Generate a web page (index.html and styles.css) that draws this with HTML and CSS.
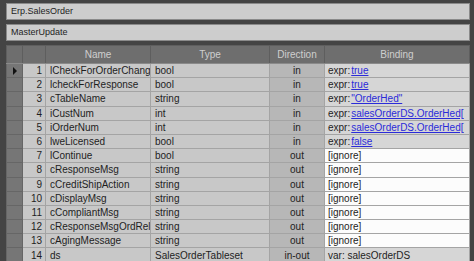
FILE: index.html
```html
<!DOCTYPE html>
<html>
<head>
<meta charset="utf-8">
<link rel="stylesheet" href="styles.css">
</head>
<body>
<div class="page">
  <div class="field">Erp.SalesOrder</div>
  <div class="field">MasterUpdate</div>
  <table class="grid">
    <colgroup>
      <col class="c-ind"><col class="c-num"><col class="c-name"><col class="c-type"><col class="c-dir"><col class="c-bind">
    </colgroup>
    <thead>
      <tr><th></th><th></th><th>Name</th><th>Type</th><th>Direction</th><th>Binding</th></tr>
    </thead>
    <tbody>
      <tr><td class="ind"><span class="arrow"></span></td><td class="num">1</td><td>lCheckForOrderChang</td><td>bool</td><td class="dir">in</td><td class="bind">expr:<a>true</a></td></tr>
      <tr><td class="ind"></td><td class="num">2</td><td>lcheckForResponse</td><td>bool</td><td class="dir">in</td><td class="bind">expr:<a>true</a></td></tr>
      <tr><td class="ind"></td><td class="num">3</td><td>cTableName</td><td>string</td><td class="dir">in</td><td class="bind">expr:<a>"OrderHed"</a></td></tr>
      <tr><td class="ind"></td><td class="num">4</td><td>iCustNum</td><td>int</td><td class="dir">in</td><td class="bind">expr:<a>salesOrderDS.OrderHed[</a></td></tr>
      <tr><td class="ind"></td><td class="num">5</td><td>iOrderNum</td><td>int</td><td class="dir">in</td><td class="bind">expr:<a>salesOrderDS.OrderHed[</a></td></tr>
      <tr><td class="ind"></td><td class="num">6</td><td>lweLicensed</td><td>bool</td><td class="dir">in</td><td class="bind">expr:<a>false</a></td></tr>
      <tr><td class="ind"></td><td class="num">7</td><td>lContinue</td><td>bool</td><td class="dir">out</td><td class="bind white">[ignore]</td></tr>
      <tr><td class="ind"></td><td class="num">8</td><td>cResponseMsg</td><td>string</td><td class="dir">out</td><td class="bind white">[ignore]</td></tr>
      <tr><td class="ind"></td><td class="num">9</td><td>cCreditShipAction</td><td>string</td><td class="dir">out</td><td class="bind white">[ignore]</td></tr>
      <tr><td class="ind"></td><td class="num">10</td><td>cDisplayMsg</td><td>string</td><td class="dir">out</td><td class="bind white">[ignore]</td></tr>
      <tr><td class="ind"></td><td class="num">11</td><td>cCompliantMsg</td><td>string</td><td class="dir">out</td><td class="bind white">[ignore]</td></tr>
      <tr><td class="ind"></td><td class="num">12</td><td>cResponseMsgOrdRel</td><td>string</td><td class="dir">out</td><td class="bind white">[ignore]</td></tr>
      <tr><td class="ind"></td><td class="num">13</td><td>cAgingMessage</td><td>string</td><td class="dir">out</td><td class="bind white">[ignore]</td></tr>
      <tr><td class="ind"></td><td class="num">14</td><td>ds</td><td>SalesOrderTableset</td><td class="dir">in-out</td><td class="bind">var: salesOrderDS</td></tr>
    </tbody>
  </table>
</div>
</body>
</html>
```
FILE: styles.css
```css
html, body {
  margin: 0;
  padding: 0;
  background: #444444;
  overflow: hidden;
}
.page {
  padding: 3px 4px 0 6px;
  display: flex;
  flex-direction: column;
  gap: 4px;
  font-family: "Liberation Sans", Arial, sans-serif;
  font-size: 10px;
  color: #1e1e1e;
}
.field {
  height: 15px;
  line-height: 15px;
  background: #cdcdcd;
  border: 1px solid #8a8a8a;
  padding-left: 4px;
  font-size: 9px;
}
.grid {
  border-collapse: collapse;
  table-layout: fixed;
  width: 463px;
  border: 1px solid #5a5a5a;
}
.c-ind { width: 16px; }
.c-num { width: 23px; }
.c-name { width: 105px; }
.c-type { width: 119px; }
.c-dir { width: 55px; }
.c-bind { width: 145px; }
.grid th {
  height: 17px;
  padding: 0;
  background: #6e6e6e;
  color: #cfcfcf;
  font-weight: normal;
  border: 1px solid #5e5e5e;
  border-bottom-color: #8a8a8a;
  text-align: center;
}
.grid td {
  height: 13.2px;
  padding: 0 0 0 4px;
  line-height: 13px;
  background: #c8c8c8;
  border: 1px solid #a4a4a4;
  white-space: nowrap;
  overflow: hidden;
}
.grid td.ind {
  background: #767676;
  border-color: #666;
  padding: 0;
}
.grid td.num {
  text-align: right;
  padding: 0 3px 0 0;
}
.grid td.dir {
  background: #b7b7b7;
  text-align: center;
  padding: 0;
}
.grid td.bind {
  background: #d6d6d6;
  padding-left: 3px;
}
.grid td.bind.white {
  background: #fcfcfc;
}
.grid a {
  color: #2b2bd9;
  text-decoration: underline;
  margin-left: 1px;
}
.arrow {
  display: block;
  width: 0;
  height: 0;
  margin-left: 6px;
  border-top: 4px solid transparent;
  border-bottom: 4px solid transparent;
  border-left: 4px solid #111;
}
```
